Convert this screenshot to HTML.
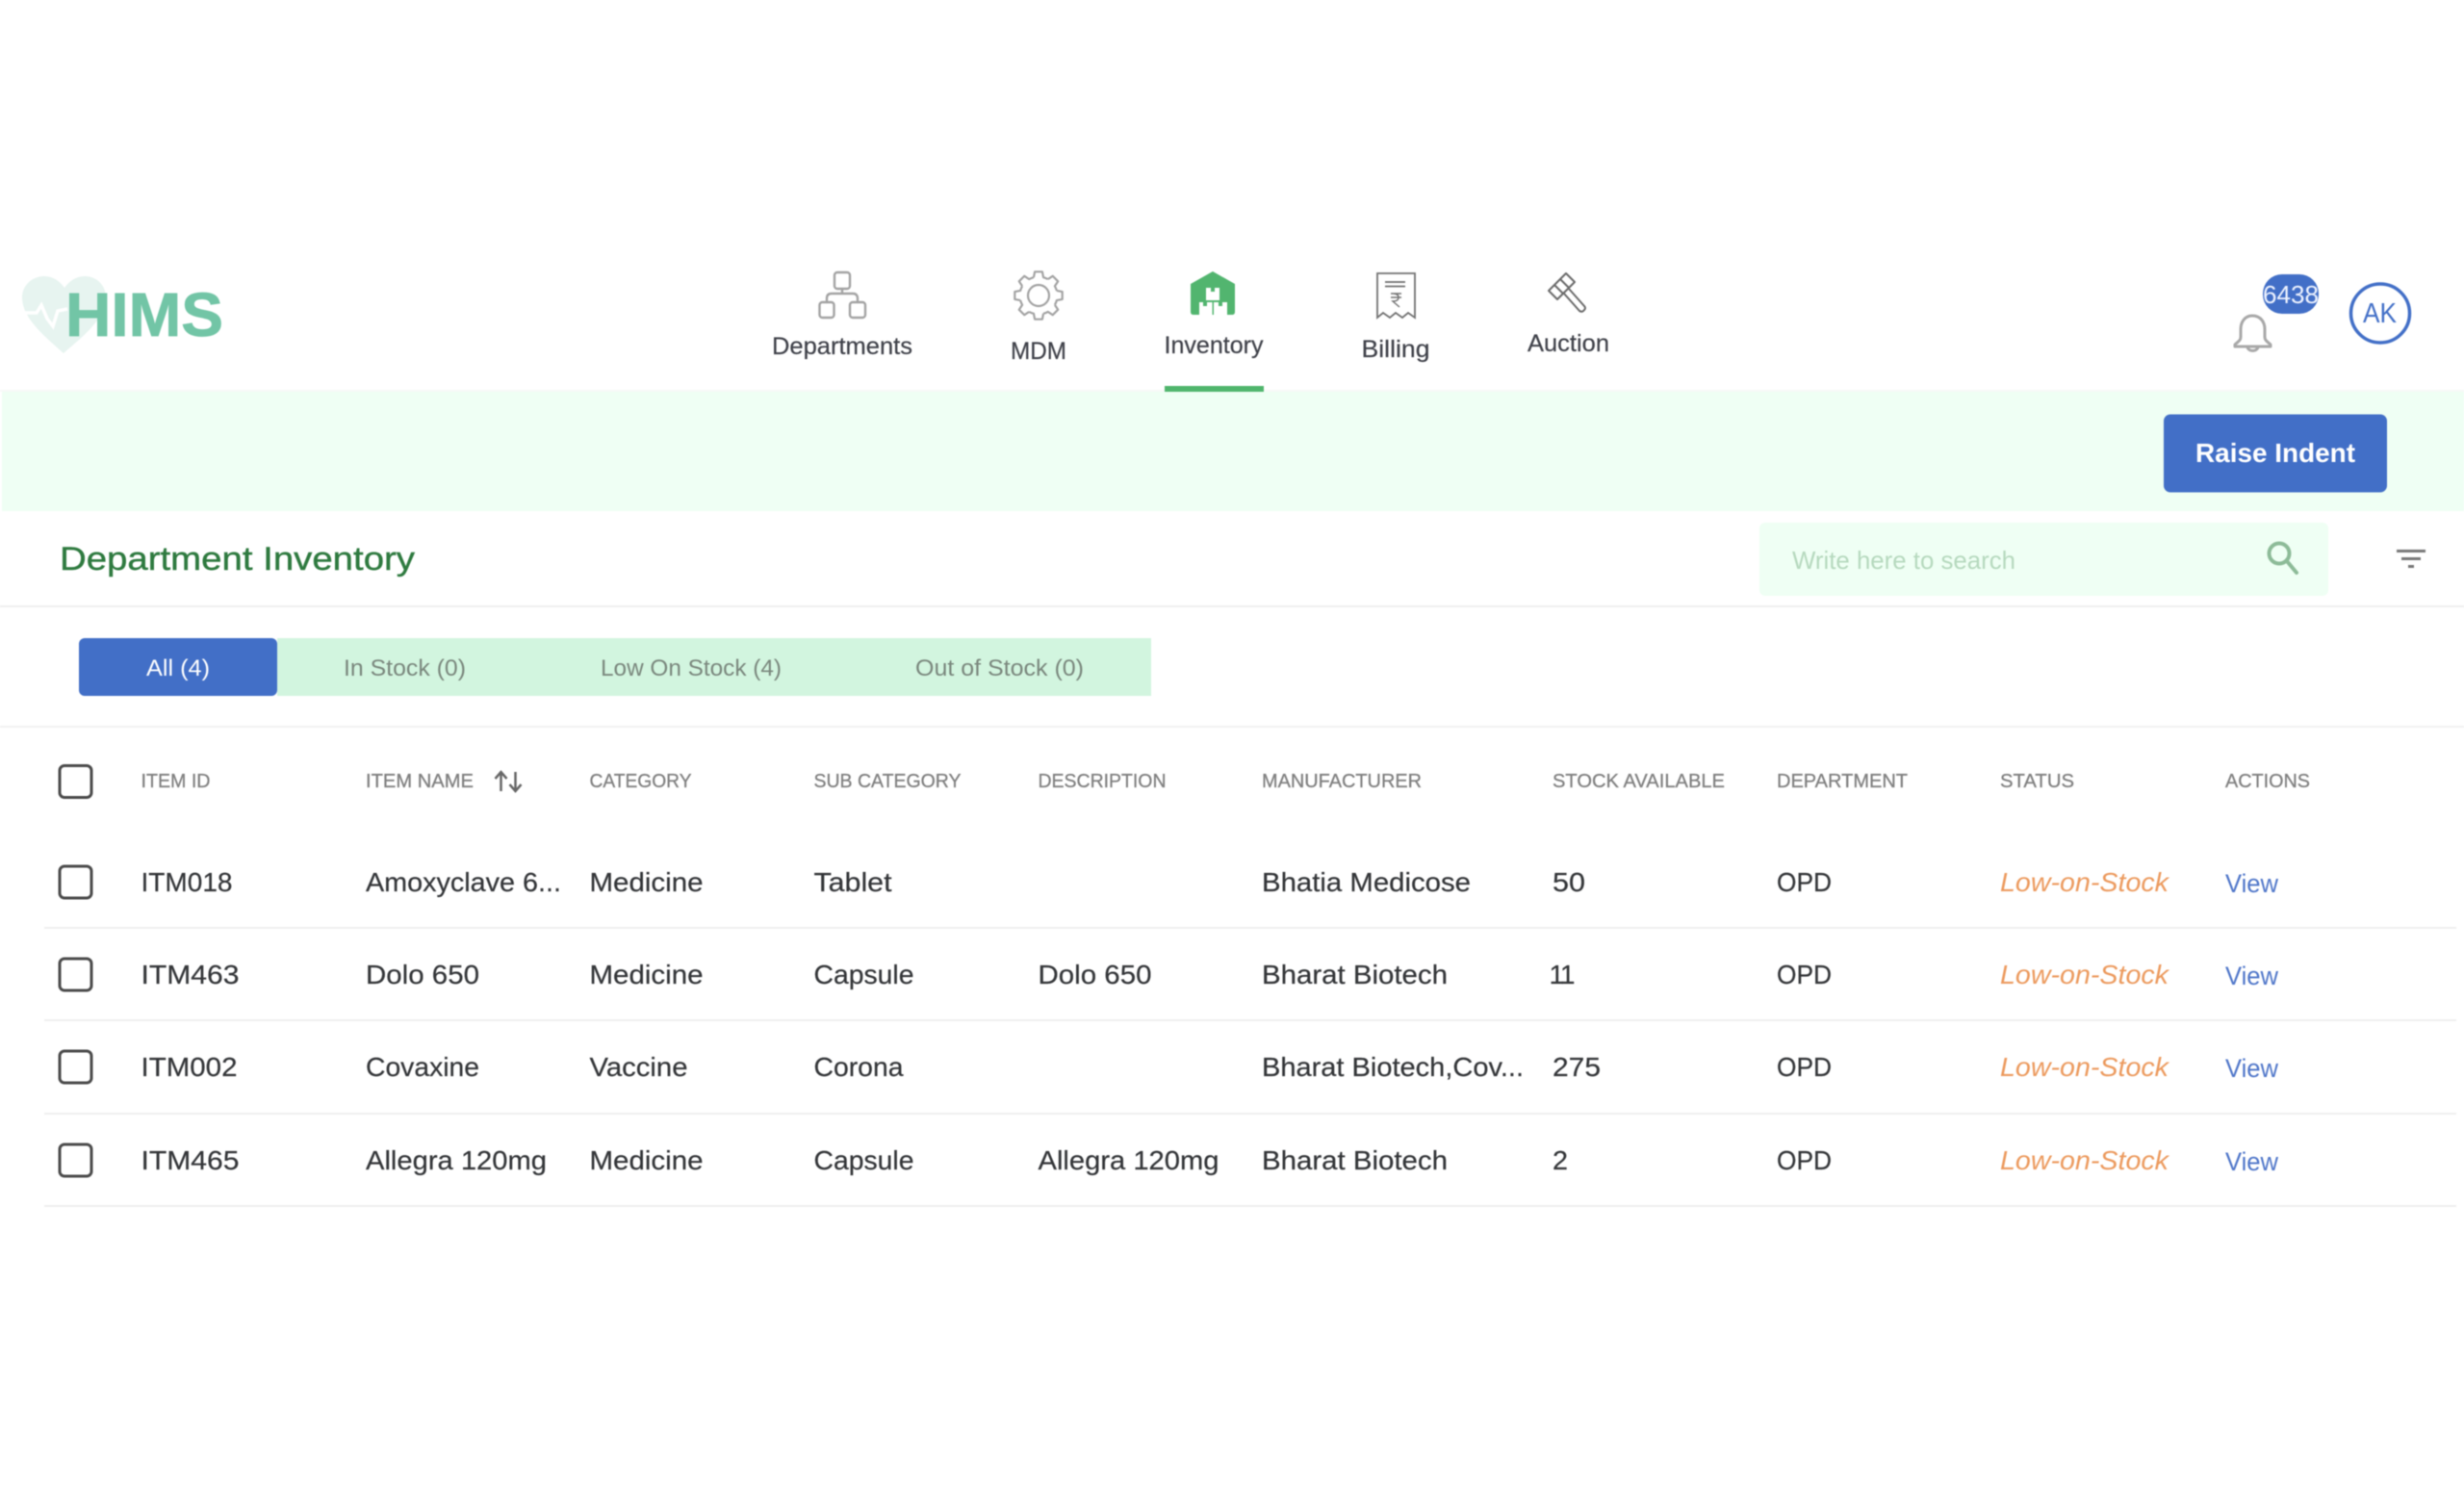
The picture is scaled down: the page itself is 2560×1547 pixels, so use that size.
<!DOCTYPE html>
<html lang="en">
<head>
<meta charset="utf-8">
<title>HIMS - Department Inventory</title>
<style>
html,body{margin:0;padding:0;background:#fff;width:2560px;height:1547px;overflow:hidden}
svg{display:block;filter:blur(.4px)}
text{font-family:"Liberation Sans",sans-serif;white-space:pre}
.nav{font-size:25px;fill:#3f4149;stroke:#3f4149;stroke-width:.2px}
.tab{font-size:24px;fill:#7a877d}
.th{font-size:20px;fill:#808080;stroke:#808080;stroke-width:.3px}
.td{font-size:28px;fill:#333538;stroke:#333538;stroke-width:.2px}
.st{font-size:28px;fill:#ec9a5e;font-style:italic}
.vw{font-size:27px;fill:#4f76c9}
.cb{fill:#fff;stroke:#4a4a4a;stroke-width:3}
.ln{fill:#efefef}
</style>
</head>
<body>
<svg xmlns="http://www.w3.org/2000/svg" width="2560" height="1547" viewBox="0 0 2560 1547">
<rect width="2560" height="1547" fill="#fff"/>

<!-- logo -->
<path d="M66 367C50 352 23 332 23 309C23 296 34 287 46 287C55 287 62 292 67 299C72 292 79 287 88 287C100 287 110 296 110 309C110 332 83 352 66 367Z" fill="#e7f4f0"/>
<path d="M24 325H38L43 317L49 331L55 339L60 323L70 321" fill="none" stroke="#fff" stroke-width="3.500"/>
<text x="68" y="349" font-size="64" font-weight="700" fill="#72c5a6" stroke="#72c5a6" stroke-width=".8" textLength="164" lengthAdjust="spacingAndGlyphs">HIMS</text>

<!-- nav icons -->
<g fill="none" stroke="#a3a3a3" stroke-width="2.400" stroke-linejoin="round" stroke-linecap="round">
<rect x="867" y="283" width="16" height="17" rx="3"/>
<path d="M875 300V305M859 314V310Q859 305 864 305H886Q891 305 891 310V314"/>
<rect x="851.500" y="314" width="15" height="16" rx="3"/>
<rect x="883" y="314" width="16" height="16" rx="3"/>
</g>
<g fill="none" stroke="#a3a3a3" stroke-width="2.200" stroke-linejoin="round" transform="translate(1079 307)">
<circle r="11"/>
<path transform="rotate(0)" d="M-5.050-18.840L-3.900-24.700H3.900L5.050-18.840A19.500 19.500 0 0 1 9.750-16.890"/>
<path transform="rotate(45)" d="M-5.050-18.840L-3.900-24.700H3.900L5.050-18.840A19.500 19.500 0 0 1 9.750-16.890"/>
<path transform="rotate(90)" d="M-5.050-18.840L-3.900-24.700H3.900L5.050-18.840A19.500 19.500 0 0 1 9.750-16.890"/>
<path transform="rotate(135)" d="M-5.050-18.840L-3.900-24.700H3.900L5.050-18.840A19.500 19.500 0 0 1 9.750-16.890"/>
<path transform="rotate(180)" d="M-5.050-18.840L-3.900-24.700H3.900L5.050-18.840A19.500 19.500 0 0 1 9.750-16.890"/>
<path transform="rotate(225)" d="M-5.050-18.840L-3.900-24.700H3.900L5.050-18.840A19.500 19.500 0 0 1 9.750-16.890"/>
<path transform="rotate(270)" d="M-5.050-18.840L-3.900-24.700H3.900L5.050-18.840A19.500 19.500 0 0 1 9.750-16.890"/>
<path transform="rotate(315)" d="M-5.050-18.840L-3.900-24.700H3.900L5.050-18.840A19.500 19.500 0 0 1 9.750-16.890"/>
</g>
<path d="M1260 282L1283 295V324Q1283 327 1280 327H1240Q1237 327 1237 324V295Z" fill="#52b56f"/>
<g fill="#fff">
<path d="M1253 299H1258V303H1262V299H1267V312H1253Z"/>
<path d="M1246 314H1250V318H1254V314H1259.500V327H1246Z"/>
<path d="M1261 314H1266V318H1270V314H1275V327H1261Z"/>
</g>
<g fill="none" stroke="#727272" stroke-width="1.800">
<path d="M1431 284H1470V330L1463 325L1457 330L1450 325L1444 330L1437 325L1431 330Z"/>
<path d="M1439 293H1460M1439 297.500H1460"/>
<path d="M1445 305H1456M1445 309H1456M1447 305Q1453 305 1453 309Q1453 313 1447 313L1454 319" stroke-width="1.400"/>
</g>
<g fill="none" stroke="#6a6a6a" stroke-width="2" stroke-linejoin="round">
<path d="M1627 284L1636 293L1618 311L1609 302Z"/>
<path d="M1621 290L1630 299M1615 296L1624 305"/>
<path d="M1625 305L1641 323Q1644 325 1646 322Q1648 320 1646 318L1630 300"/>
</g>

<!-- nav labels -->
<text class="nav" x="802" y="368" textLength="146" lengthAdjust="spacingAndGlyphs">Departments</text>
<text class="nav" x="1050" y="373" textLength="58" lengthAdjust="spacingAndGlyphs">MDM</text>
<text class="nav" x="1209.500" y="367" textLength="103" lengthAdjust="spacingAndGlyphs">Inventory</text>
<text class="nav" x="1414.500" y="371" textLength="71" lengthAdjust="spacingAndGlyphs">Billing</text>
<text class="nav" x="1587" y="365" textLength="85" lengthAdjust="spacingAndGlyphs">Auction</text>

<!-- bell, badge, avatar -->
<g fill="none" stroke="#a8a8a8" stroke-width="3" stroke-linejoin="round">
<path d="M2340 328C2332 328 2328 335 2328 342V350C2328 354 2325 355 2322 358V360H2359V358C2356 355 2353 354 2353 350V342C2353 335 2349 328 2340 328Z"/>
<path d="M2335 360A5 4 0 0 0 2346 360"/>
</g>
<rect x="2351" y="285" width="58" height="41" rx="20" fill="#426fc7"/>
<text x="2351" y="315" font-size="26" fill="#eef3ff" textLength="58" lengthAdjust="spacingAndGlyphs">6438</text>
<circle cx="2473" cy="325.500" r="30.500" fill="#fff" stroke="#426fc7" stroke-width="3.500"/>
<text x="2455" y="335" font-size="29" fill="#426fc7" textLength="35" lengthAdjust="spacingAndGlyphs">AK</text>

<!-- green band -->
<rect x="0" y="405" width="2560" height="2" fill="#f7f8f7"/>
<rect x="2" y="407" width="2558" height="124" fill="#effff4"/>
<rect x="1210" y="401" width="103" height="6" fill="#4fb56c"/>
<rect x="2248" y="430.500" width="232" height="81" rx="7" fill="#426fc7"/>
<text x="2281" y="480" font-size="28" font-weight="700" fill="#fff" textLength="166" lengthAdjust="spacingAndGlyphs">Raise Indent</text>

<!-- title row -->
<text x="62" y="592" font-size="34" fill="#2e7a3f" stroke="#2e7a3f" stroke-width=".4" textLength="369" lengthAdjust="spacingAndGlyphs">Department Inventory</text>
<rect x="1828" y="543" width="591" height="76" rx="6" fill="#effff4"/>
<text x="1862" y="591" font-size="26" fill="#b6d9be" textLength="232" lengthAdjust="spacingAndGlyphs">Write here to search</text>
<g fill="none" stroke="#8dbb98" stroke-width="4" stroke-linecap="round">
<circle cx="2368" cy="575" r="10.500"/>
<path d="M2376 583L2386 595"/>
</g>
<g fill="#777">
<rect x="2490" y="571" width="30" height="3"/>
<rect x="2495" y="579" width="20" height="3"/>
<rect x="2502" y="587" width="6" height="3"/>
</g>
<rect x="0" y="629" width="2560" height="2" fill="#eeeeee"/>

<!-- tabs -->
<rect x="288" y="663" width="908" height="60" fill="#d2f5df"/>
<rect x="82" y="663" width="206" height="60" rx="6" fill="#426fc7"/>
<text x="152" y="702" font-size="24" fill="#fff" textLength="66" lengthAdjust="spacingAndGlyphs">All (4)</text>
<text class="tab" x="357" y="702" textLength="127" lengthAdjust="spacingAndGlyphs">In Stock (0)</text>
<text class="tab" x="624" y="702" textLength="188" lengthAdjust="spacingAndGlyphs">Low On Stock (4)</text>
<text class="tab" x="951" y="702" textLength="175" lengthAdjust="spacingAndGlyphs">Out of Stock (0)</text>
<rect x="0" y="754" width="2560" height="2" fill="#f1f1f1"/>

<!-- table header -->
<rect class="cb" x="62" y="795.500" width="33" height="33" rx="5"/>
<text class="th" x="146.500" y="818" textLength="72" lengthAdjust="spacingAndGlyphs">ITEM ID</text>
<text class="th" x="380" y="818" textLength="112" lengthAdjust="spacingAndGlyphs">ITEM NAME</text>
<g fill="none" stroke="#666" stroke-width="2.500">
<path d="M520.500 822V803M514.500 809L520.500 802L526.500 809"/>
<path d="M535.500 802V821M529.500 815L535.500 822L541.500 815"/>
</g>
<text class="th" x="612.500" y="818" textLength="106" lengthAdjust="spacingAndGlyphs">CATEGORY</text>
<text class="th" x="845.500" y="818" textLength="153" lengthAdjust="spacingAndGlyphs">SUB CATEGORY</text>
<text class="th" x="1078.500" y="818" textLength="133" lengthAdjust="spacingAndGlyphs">DESCRIPTION</text>
<text class="th" x="1311" y="818" textLength="166" lengthAdjust="spacingAndGlyphs">MANUFACTURER</text>
<text class="th" x="1613" y="818" textLength="179" lengthAdjust="spacingAndGlyphs">STOCK AVAILABLE</text>
<text class="th" x="1846" y="818" textLength="136" lengthAdjust="spacingAndGlyphs">DEPARTMENT</text>
<text class="th" x="2078" y="818" textLength="77" lengthAdjust="spacingAndGlyphs">STATUS</text>
<text class="th" x="2312" y="818" textLength="88" lengthAdjust="spacingAndGlyphs">ACTIONS</text>

<!-- row 1 -->
<rect class="cb" x="62" y="900" width="33" height="33" rx="5"/>
<text class="td" x="146.500" y="926" textLength="95" lengthAdjust="spacingAndGlyphs">ITM018</text>
<text class="td" x="380" y="926" textLength="203" lengthAdjust="spacingAndGlyphs">Amoxyclave 6...</text>
<text class="td" x="612.500" y="926" textLength="118" lengthAdjust="spacingAndGlyphs">Medicine</text>
<text class="td" x="845.500" y="926" textLength="81" lengthAdjust="spacingAndGlyphs">Tablet</text>
<text class="td" x="1311" y="926" textLength="217" lengthAdjust="spacingAndGlyphs">Bhatia Medicose</text>
<text class="td" x="1613" y="926" textLength="34" lengthAdjust="spacingAndGlyphs">50</text>
<text class="td" x="1846" y="926" textLength="57" lengthAdjust="spacingAndGlyphs">OPD</text>
<text class="st" x="2078" y="926" textLength="175" lengthAdjust="spacingAndGlyphs">Low-on-Stock</text>
<text class="vw" x="2312" y="927" textLength="55" lengthAdjust="spacingAndGlyphs">View</text>
<rect class="ln" x="46" y="963" width="2506" height="2"/>

<!-- row 2 -->
<rect class="cb" x="62" y="996" width="33" height="33" rx="5"/>
<text class="td" x="146.500" y="1022" textLength="102" lengthAdjust="spacingAndGlyphs">ITM463</text>
<text class="td" x="380" y="1022" textLength="118" lengthAdjust="spacingAndGlyphs">Dolo 650</text>
<text class="td" x="612.500" y="1022" textLength="118" lengthAdjust="spacingAndGlyphs">Medicine</text>
<text class="td" x="845.500" y="1022" textLength="104" lengthAdjust="spacingAndGlyphs">Capsule</text>
<text class="td" x="1078.500" y="1022" textLength="118" lengthAdjust="spacingAndGlyphs">Dolo 650</text>
<text class="td" x="1311" y="1022" textLength="193" lengthAdjust="spacingAndGlyphs">Bharat Biotech</text>
<text class="td" x="1609.500" y="1022" textLength="27" lengthAdjust="spacing">11</text>
<text class="td" x="1846" y="1022" textLength="57" lengthAdjust="spacingAndGlyphs">OPD</text>
<text class="st" x="2078" y="1022" textLength="175" lengthAdjust="spacingAndGlyphs">Low-on-Stock</text>
<text class="vw" x="2312" y="1023" textLength="55" lengthAdjust="spacingAndGlyphs">View</text>
<rect class="ln" x="46" y="1059" width="2506" height="2"/>

<!-- row 3 -->
<rect class="cb" x="62" y="1092" width="33" height="33" rx="5"/>
<text class="td" x="146.500" y="1118" textLength="100" lengthAdjust="spacingAndGlyphs">ITM002</text>
<text class="td" x="380" y="1118" textLength="118" lengthAdjust="spacingAndGlyphs">Covaxine</text>
<text class="td" x="612.500" y="1118" textLength="102" lengthAdjust="spacingAndGlyphs">Vaccine</text>
<text class="td" x="845.500" y="1118" textLength="93" lengthAdjust="spacingAndGlyphs">Corona</text>
<text class="td" x="1311" y="1118" textLength="272" lengthAdjust="spacingAndGlyphs">Bharat Biotech,Cov...</text>
<text class="td" x="1613" y="1118" textLength="50" lengthAdjust="spacingAndGlyphs">275</text>
<text class="td" x="1846" y="1118" textLength="57" lengthAdjust="spacingAndGlyphs">OPD</text>
<text class="st" x="2078" y="1118" textLength="175" lengthAdjust="spacingAndGlyphs">Low-on-Stock</text>
<text class="vw" x="2312" y="1119" textLength="55" lengthAdjust="spacingAndGlyphs">View</text>
<rect class="ln" x="46" y="1156" width="2506" height="2"/>

<!-- row 4 -->
<rect class="cb" x="62" y="1189" width="33" height="33" rx="5"/>
<text class="td" x="146.500" y="1215" textLength="102" lengthAdjust="spacingAndGlyphs">ITM465</text>
<text class="td" x="380" y="1215" textLength="188" lengthAdjust="spacingAndGlyphs">Allegra 120mg</text>
<text class="td" x="612.500" y="1215" textLength="118" lengthAdjust="spacingAndGlyphs">Medicine</text>
<text class="td" x="845.500" y="1215" textLength="104" lengthAdjust="spacingAndGlyphs">Capsule</text>
<text class="td" x="1078.500" y="1215" textLength="188" lengthAdjust="spacingAndGlyphs">Allegra 120mg</text>
<text class="td" x="1311" y="1215" textLength="193" lengthAdjust="spacingAndGlyphs">Bharat Biotech</text>
<text class="td" x="1613" y="1215" textLength="16" lengthAdjust="spacingAndGlyphs">2</text>
<text class="td" x="1846" y="1215" textLength="57" lengthAdjust="spacingAndGlyphs">OPD</text>
<text class="st" x="2078" y="1215" textLength="175" lengthAdjust="spacingAndGlyphs">Low-on-Stock</text>
<text class="vw" x="2312" y="1216" textLength="55" lengthAdjust="spacingAndGlyphs">View</text>
<rect class="ln" x="46" y="1252" width="2506" height="2"/>
</svg>
</body>
</html>
